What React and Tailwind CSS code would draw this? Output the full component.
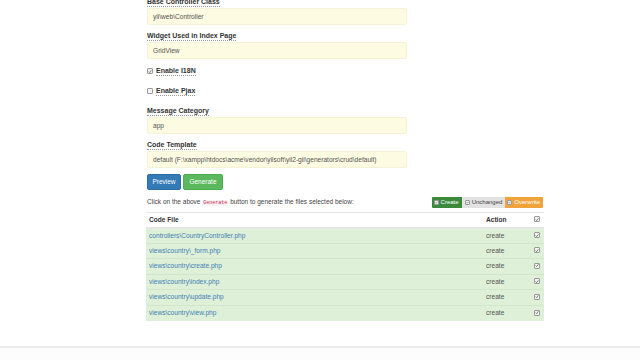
import React from 'react';

const files = [
    'controllers\\CountryController.php',
    'views\\country\\_form.php',
    'views\\country\\create.php',
    'views\\country\\index.php',
    'views\\country\\update.php',
    'views\\country\\view.php',
];

function Box({ checked, className = '' }) {
    return (
        <span className={`inline-flex items-center justify-center w-[6px] h-[6px] border border-[#9a9a9a] bg-[#f4f4f4] rounded-[1px] ${className}`}>
            {checked && (
                <svg viewBox="0 0 6 6" className="w-[5px] h-[5px]">
                    <path d="M1 3.2 L2.4 4.6 L5 1.2" fill="none" stroke="#444" strokeWidth="1" />
                </svg>
            )}
        </span>
    );
}

function Field({ label, value, className }) {
    return (
        <div className={className}>
            <div className="h-[10px] leading-[10px]">
                <span className="font-bold text-[7px] text-[#333] border-b border-dotted border-[#999] pb-[1px]">{label}</span>
            </div>
            <div className="mt-[4px] h-[17px] w-[260px] bg-[#fdfbe2] border border-[#f6f2d6] rounded-[2px] flex items-center px-[5px] text-[6.6px] text-[#555]">
                {value}
            </div>
        </div>
    );
}

function Check({ label, checked, className }) {
    return (
        <div className={`h-[10px] flex items-center gap-[3px] ${className}`}>
            <Box checked={checked} />
            <span className="font-bold text-[7px] text-[#333] border-b border-dotted border-[#999] leading-[8px]">{label}</span>
        </div>
    );
}

export default function App() {
    return (
        <div className="w-[640px] h-[360px] bg-white overflow-hidden flex flex-col" style={{ fontFamily: '"Liberation Sans", Arial, sans-serif' }}>
            <div className="h-[346px] pl-[147px] flex flex-col">
                <Field className="-mt-[6px]" label="Base Controller Class" value="yii\web\Controller" />
                <Field className="mt-[3px]" label="Widget Used in Index Page" value="GridView" />
                <Check label="Enable I18N" checked className="mt-[7px]" />
                <Check label="Enable Pjax" className="mt-[10px]" />
                <Field className="mt-[7px]" label="Message Category" value="app" />
                <Field className="mt-[3px]" label="Code Template" value="default (F:\xampp\htdocs\acme\vendor\yiisoft\yii2-gii\generators\crud\default)" />

                <div className="mt-[6px] flex gap-[2px]">
                    <button className="h-[16px] w-[34px] bg-[#337ab7] border border-[#2e6da4] rounded-[2px] text-white text-[6.5px]">Preview</button>
                    <button className="h-[16px] w-[40px] bg-[#5cb85c] border border-[#4cae4c] rounded-[2px] text-white text-[6.5px]">Generate</button>
                </div>

                <div className="mt-[6px] w-[397px] -ml-[1px] flex items-center justify-between h-[12px]">
                    <p className="text-[6.5px] text-[#444] pl-[1px]">
                        Click on the above{' '}
                        <code className="text-[5px] text-[#c7254e] bg-[#f9f2f4] px-[1px]" style={{ fontFamily: '"Liberation Mono", monospace' }}>Generate</code>{' '}
                        button to generate the files selected below:
                    </p>
                    <div className="flex h-[11px] text-[6px]">
                        <span className="flex items-center gap-[2px] bg-[#3b8a3b] text-white pl-[2px] pr-[3px] rounded-l-[1px]"><Box checked className="!w-[5px] !h-[5px]" />Create</span>
                        <span className="flex items-center gap-[2px] bg-[#e2e2e2] text-[#444] pl-[3px] pr-[3px]"><Box checked className="!w-[5px] !h-[5px]" />Unchanged</span>
                        <span className="flex items-center gap-[2px] bg-[#f0a33a] text-white pl-[2px] pr-[3px] rounded-r-[1px]"><Box checked className="!w-[5px] !h-[5px]" />Overwrite</span>
                    </div>
                </div>

                <table className="mt-[4px] -ml-[1px] w-[398px] border-collapse text-[6.6px]">
                    <thead>
                        <tr className="h-[15px] border-t border-b-2 border-[#e6e6e6]">
                            <th className="text-left font-bold text-[#333] pl-[3px]">Code File</th>
                            <th className="text-left font-bold text-[#333] w-[44px]">Action</th>
                            <th className="w-[14px]"><Box checked /></th>
                        </tr>
                    </thead>
                    <tbody>
                        {files.map((f) => (
                            <tr key={f} className="h-[15.5px] bg-[#dff0d8] border-t border-[#d3e6cb]">
                                <td className="pl-[3px] text-[#3f7fb5]">{f}</td>
                                <td className="text-[#555]">create</td>
                                <td className="text-center"><Box checked /></td>
                            </tr>
                        ))}
                    </tbody>
                </table>
            </div>
            <div className="h-[2px] bg-[#ececec]" />
            <div className="flex-1 bg-[#fdfdfd]" />
        </div>
    );
}
